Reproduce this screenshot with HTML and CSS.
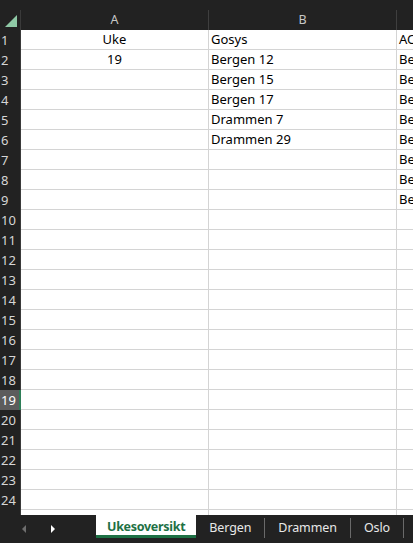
FILE: index.html
```html
<!DOCTYPE html>
<html lang="no">
<head>
  <meta charset="UTF-8">
  <title>Ukesoversikt</title>
  <link rel="stylesheet" href="styles.css">
</head>
<body>
  <div class="sheet">
    <div class="topstrip"></div>
    <div class="grid">
      <div class="corner"><span class="tri"></span></div>
      <div class="colhead">A</div>
      <div class="colhead">B</div>
      <div class="colhead last"></div>

      <div class="rowhead">1</div><div class="cell center">Uke</div><div class="cell">Gosys</div><div class="cell last">AO</div>
      <div class="rowhead">2</div><div class="cell center">19</div><div class="cell">Bergen 12</div><div class="cell last">Be</div>
      <div class="rowhead">3</div><div class="cell"></div><div class="cell">Bergen 15</div><div class="cell last">Be</div>
      <div class="rowhead">4</div><div class="cell"></div><div class="cell">Bergen 17</div><div class="cell last">Be</div>
      <div class="rowhead">5</div><div class="cell"></div><div class="cell">Drammen 7</div><div class="cell last">Be</div>
      <div class="rowhead">6</div><div class="cell"></div><div class="cell">Drammen 29</div><div class="cell last">Be</div>
      <div class="rowhead">7</div><div class="cell"></div><div class="cell"></div><div class="cell last">Be</div>
      <div class="rowhead">8</div><div class="cell"></div><div class="cell"></div><div class="cell last">Be</div>
      <div class="rowhead">9</div><div class="cell"></div><div class="cell"></div><div class="cell last">Be</div>
      <div class="rowhead">10</div><div class="cell"></div><div class="cell"></div><div class="cell last"></div>
      <div class="rowhead">11</div><div class="cell"></div><div class="cell"></div><div class="cell last"></div>
      <div class="rowhead">12</div><div class="cell"></div><div class="cell"></div><div class="cell last"></div>
      <div class="rowhead">13</div><div class="cell"></div><div class="cell"></div><div class="cell last"></div>
      <div class="rowhead">14</div><div class="cell"></div><div class="cell"></div><div class="cell last"></div>
      <div class="rowhead">15</div><div class="cell"></div><div class="cell"></div><div class="cell last"></div>
      <div class="rowhead">16</div><div class="cell"></div><div class="cell"></div><div class="cell last"></div>
      <div class="rowhead">17</div><div class="cell"></div><div class="cell"></div><div class="cell last"></div>
      <div class="rowhead">18</div><div class="cell"></div><div class="cell"></div><div class="cell last"></div>
      <div class="rowhead selected">19</div><div class="cell"></div><div class="cell"></div><div class="cell last"></div>
      <div class="rowhead">20</div><div class="cell"></div><div class="cell"></div><div class="cell last"></div>
      <div class="rowhead">21</div><div class="cell"></div><div class="cell"></div><div class="cell last"></div>
      <div class="rowhead">22</div><div class="cell"></div><div class="cell"></div><div class="cell last"></div>
      <div class="rowhead">23</div><div class="cell"></div><div class="cell"></div><div class="cell last"></div>
      <div class="rowhead">24</div><div class="cell"></div><div class="cell"></div><div class="cell last"></div>
      <div class="rowhead">25</div><div class="cell"></div><div class="cell"></div><div class="cell last"></div>
    </div>
    <div class="tabbar">
      <div class="nav">
        <span class="arrow left"></span>
        <span class="arrow right"></span>
      </div>
      <div class="tab active">Ukesoversikt</div>
      <div class="tab">Bergen</div>
      <div class="tab">Drammen</div>
      <div class="tab">Oslo</div>
    </div>
  </div>
</body>
</html>
```

FILE: styles.css
```css
html, body {
  margin: 0;
  padding: 0;
  background: #222222;
  overflow: hidden;
}
.sheet {
  width: 413px;
  height: 543px;
  display: flex;
  flex-direction: column;
  font-family: 'Noto Sans', 'Open Sans', sans-serif;
  font-size: 13px;
}
.topstrip {
  height: 10px;
  background: #222222;
  flex: none;
}
.grid {
  display: grid;
  grid-template-columns: 21px 188px 188px 1fr;
  grid-auto-rows: 20px;
  height: 505px;
  overflow: hidden;
  flex: none;
  background: #fff;
}
.corner {
  background: #222222;
  border-right: 1px solid #3a3a3a;
  position: relative;
}
.corner .tri {
  position: absolute;
  right: 3px;
  bottom: 3px;
  width: 0;
  height: 0;
  border-left: 12px solid transparent;
  border-bottom: 12px solid #8fc9a6;
}
.colhead {
  background: #222222;
  color: #c8c8c8;
  text-align: center;
  line-height: 20px;
  font-size: 12.5px;
  border-right: 1px solid #3f3f3f;
}
.colhead.last {
  border-right: none;
}
.rowhead {
  background: #222222;
  color: #d6d6d6;
  padding-left: 1px;
  line-height: 20px;
  font-size: 13px;
  border-right: 1px solid #3a3a3a;
}
.rowhead.selected {
  background: #5c5c5c;
  color: #ffffff;
  border-right: 2px solid #2e7d57;
}
.cell {
  color: #000;
  border-right: 1px solid #d4d4d4;
  border-bottom: 1px solid #d4d4d4;
  line-height: 19px;
  padding-left: 2px;
  white-space: nowrap;
  overflow: hidden;
}
.cell.center {
  text-align: center;
  padding-left: 0;
}
.cell.last {
  border-right: none;
}
.tabbar {
  flex: 1;
  display: flex;
  align-items: flex-start;
  background: #222222;
  color: #e8e8e8;
}
.nav {
  width: 96px;
  height: 28px;
  position: relative;
  flex: none;
}
.arrow {
  position: absolute;
  top: 10px;
  width: 0;
  height: 0;
  border-top: 4px solid transparent;
  border-bottom: 4px solid transparent;
}
.arrow.left {
  left: 22px;
  border-right: 4px solid #6e6e6e;
}
.arrow.right {
  left: 51px;
  border-left: 4px solid #ffffff;
}
.tab {
  padding: 0 13px 0 13px;
  border-right: 1px solid #6a6a6a;
  margin-top: 3px;
  height: 20px;
  line-height: 20px;
  font-size: 12.5px;
  letter-spacing: -0.1px;
}
.tab.active {
  margin-top: 0;
  height: 20px;
  line-height: 24px;
  padding: 0 11px 0 11px;
  background: #ffffff;
  color: #1e7145;
  font-weight: bold;
  font-size: 12.5px;
  letter-spacing: -0.3px;
  border-right: none;
  border-bottom: 3px solid #1e7145;
}
```
